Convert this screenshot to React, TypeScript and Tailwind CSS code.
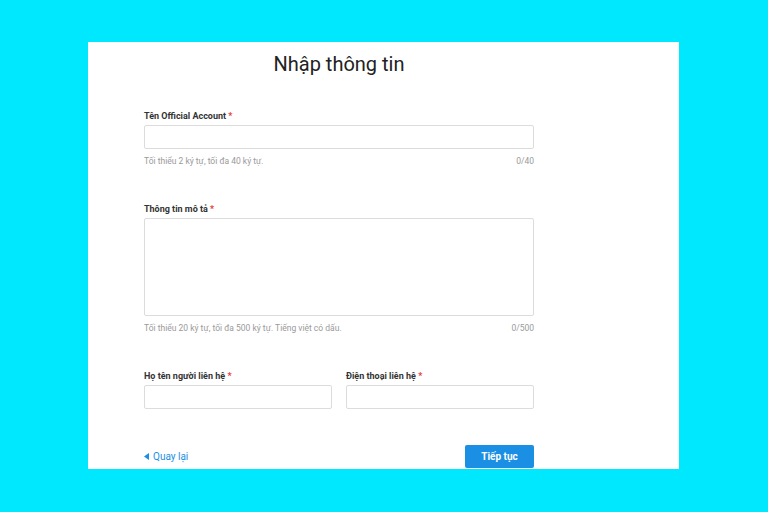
import React from "react";

function Field({ label, children }: { label: string; children: React.ReactNode }) {
  return (
    <div>
      <label className="block text-[9px] leading-[12px] font-bold text-[#333]">
        {label} <span className="text-[#e53935]">*</span>
      </label>
      <div className="mt-[3px]">{children}</div>
    </div>
  );
}

export default function App() {
  return (
    <div
      className="h-[512px] w-[768px] bg-[#00e8fe] pt-[42px] pl-[88px] overflow-hidden"
      style={{ fontFamily: "Roboto, 'Liberation Sans', sans-serif" }}
    >
      <div className="w-[591px] h-[427px] bg-white overflow-hidden">
        <div className="w-[390px] ml-[56px] pt-[10px]">
          <h1 className="text-center text-[20px] leading-[24px] text-[#222]">Nhập thông tin</h1>

          <div className="mt-[34px]">
            <Field label="Tên Official Account">
              <input className="block w-full h-[24px] border border-[#dcdcdc] rounded-[2px] outline-none" />
            </Field>
            <div className="mt-[6px] flex justify-between text-[8.5px] leading-[12px] text-[#9a9a9a]">
              <span>Tối thiểu 2 ký tự, tối đa 40 ký tự.</span>
              <span>0/40</span>
            </div>
          </div>

          <div className="mt-[36px]">
            <Field label="Thông tin mô tả">
              <textarea className="block w-full h-[98px] border border-[#dcdcdc] rounded-[2px] outline-none resize-none" />
            </Field>
            <div className="mt-[6px] flex justify-between text-[8.5px] leading-[12px] text-[#9a9a9a]">
              <span>Tối thiểu 20 ký tự, tối đa 500 ký tự. Tiếng việt có dấu.</span>
              <span>0/500</span>
            </div>
          </div>

          <div className="mt-[36px] grid grid-cols-2 gap-[14px]">
            <Field label="Họ tên người liên hệ">
              <input className="block w-full h-[24px] border border-[#dcdcdc] rounded-[2px] outline-none" />
            </Field>
            <Field label="Điện thoại liên hệ">
              <input className="block w-full h-[24px] border border-[#dcdcdc] rounded-[2px] outline-none" />
            </Field>
          </div>

          <div className="mt-[36px] flex items-center justify-between">
            <button className="flex items-center gap-[4px] text-[10px] text-[#1a8fe3]">
              <svg width="5" height="7" viewBox="0 0 5 7">
                <path d="M5 0 L0 3.5 L5 7 Z" fill="#1a8fe3" />
              </svg>
              Quay lại
            </button>
            <button className="w-[69px] h-[23px] rounded-[2px] bg-[#1a8fe3] text-white text-[10px] font-bold">
              Tiếp tục
            </button>
          </div>
        </div>
      </div>
    </div>
  );
}
